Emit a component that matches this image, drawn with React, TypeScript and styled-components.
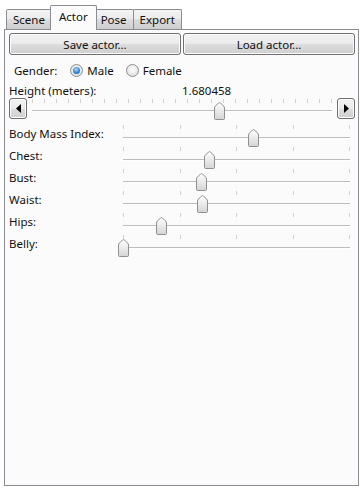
import React from "react";
import styled, { createGlobalStyle } from "styled-components";

const Global = createGlobalStyle`
  html, body { margin: 0; padding: 0; background: #ffffff; }
  body {
    font-family: "Noto Sans", "Open Sans", "DejaVu Sans", sans-serif;
    font-size: 11.5px;
    color: #111;
  }
  * { box-sizing: border-box; }
`;

const Window = styled.div`
  width: 363px;
  height: 500px;
  padding: 5px 4px 0 4px;
  display: flex;
  flex-direction: column;
`;

const TabStrip = styled.div`
  display: flex;
  align-items: flex-end;
  height: 25px;
  margin-bottom: -1px;
  padding-left: 2px;
  position: relative;
  z-index: 1;
`;

const Tab = styled.div<{ $active?: boolean }>`
  height: ${(p) => (p.$active ? "25px" : "20px")};
  margin-bottom: ${(p) => (p.$active ? "0" : "1px")};
  margin-left: ${(p) => (p.$active ? "-2px" : "-1px")};
  margin-right: ${(p) => (p.$active ? "-2px" : "0")};
  padding: 0 ${(p) => (p.$active ? "8px" : "6px")};
  border: 1px solid #898c95;
  border-bottom: none;
  border-radius: 2px 2px 0 0;
  background: ${(p) =>
    p.$active ? "#fbfbfb" : "linear-gradient(#f3f3f3, #ebebeb 50%, #dddddd 50%, #cdcdcd)"};
  display: flex;
  align-items: center;
  padding-bottom: ${(p) => (p.$active ? "3px" : "0")};
  position: relative;
  z-index: ${(p) => (p.$active ? 2 : 1)};
  &:first-child { margin-left: 0; }
`;

const Panel = styled.div`
  height: 457px;
  border: 1px solid #898c95;
  background: #fbfbfb;
  padding: 3px 3px 0 4px;
  display: flex;
  flex-direction: column;
`;

const ButtonRow = styled.div`
  display: grid;
  grid-template-columns: 1fr 1fr;
  gap: 2px;
  height: 22px;
`;

const PushButton = styled.button`
  height: 22px;
  border: 1px solid #707070;
  border-radius: 3px;
  background: linear-gradient(#f2f2f2 0%, #ebebeb 50%, #dddddd 50%, #cfcfcf 100%);
  box-shadow: inset 0 0 0 1px #fbfbfb;
  font: inherit;
  color: #111;
  padding: 0;
`;

const GenderRow = styled.div`
  display: flex;
  align-items: center;
  height: 16px;
  margin-top: 7px;
  padding-left: 5px;
`;

const RadioLabel = styled.label`
  display: flex;
  align-items: center;
  gap: 4px;
  margin-left: 12px;
  &:first-of-type { margin-left: 13px; }
`;

const RadioDot = styled.span<{ $on?: boolean }>`
  width: 13px;
  height: 13px;
  border-radius: 50%;
  border: 1px solid #8e8f8f;
  background: radial-gradient(circle at 50% 40%, #ffffff, #d6d6d6);
  display: flex;
  align-items: center;
  justify-content: center;
  &::after {
    content: "";
    width: 7px;
    height: 7px;
    border-radius: 50%;
    display: ${(p) => (p.$on ? "block" : "none")};
    background: radial-gradient(circle at 45% 35%, #a8dcff, #2c7fd0 60%, #1a4e8c);
  }
`;

const HeightHeader = styled.div`
  display: grid;
  grid-template-columns: 173px 1fr;
  height: 15px;
  line-height: 15px;
  margin-top: 5px;
`;

const HeightRow = styled.div`
  display: flex;
  align-items: flex-start;
  height: 21px;
`;

const ArrowButton = styled.button`
  width: 18px;
  height: 21px;
  flex: none;
  border: 1px solid #707070;
  border-radius: 3px;
  background: linear-gradient(#f2f2f2 0%, #ebebeb 50%, #dddddd 50%, #cfcfcf 100%);
  box-shadow: inset 0 0 0 1px #fbfbfb;
  padding: 0;
  display: flex;
  align-items: center;
  justify-content: center;
`;

const SliderBox = styled.div<{ $h: number }>`
  position: relative;
  flex: 1;
  height: ${(p) => p.$h}px;
  padding: 0 5px;
  display: flex;
  flex-direction: column;
`;

const Ticks = styled.div<{ $top: number }>`
  display: flex;
  justify-content: space-between;
  height: 4px;
  margin-top: ${(p) => p.$top}px;
`;

const Tick = styled.span`
  width: 1px;
  height: 4px;
  background: #d2d2d2;
`;

const Track = styled.div<{ $gap: number }>`
  height: 1px;
  margin-top: ${(p) => p.$gap}px;
  background: #bdbdbd;
  box-shadow: 0 1px 0 #ffffff;
`;

const ThumbWrap = styled.div<{ $top: number }>`
  position: absolute;
  top: ${(p) => p.$top}px;
  width: 11px;
  height: 18px;
  display: flex;
`;

const SliderRows = styled.div`
  display: flex;
  flex-direction: column;
  margin-top: 4px;
`;

const SliderRow = styled.div`
  display: grid;
  grid-template-columns: 109px 1fr;
  height: 22px;
  align-items: start;
`;

const RowLabel = styled.span`
  line-height: 22px;
`;

const Thumb: React.FC<{ value: number; top: number }> = ({ value, top }) => (
  <ThumbWrap $top={top} style={{ left: `calc(${value} * (100% - 11px))` }}>
    <svg width="11" height="18" viewBox="0 0 11 18">
      <defs>
        <linearGradient id="tg" x1="0" y1="0" x2="0" y2="1">
          <stop offset="0" stopColor="#ffffff" />
          <stop offset="1" stopColor="#d4d4d4" />
        </linearGradient>
      </defs>
      <path
        d="M0.5 6 Q0.5 5 1.5 4 L4.5 1 Q5.5 0.2 6.5 1 L9.5 4 Q10.5 5 10.5 6 L10.5 16.5 Q10.5 17.5 9.5 17.5 L1.5 17.5 Q0.5 17.5 0.5 16.5 Z"
        fill="url(#tg)"
        stroke="#8f8f8f"
      />
    </svg>
  </ThumbWrap>
);

const Slider: React.FC<{
  value: number;
  ticks: number;
  h: number;
  tickTop: number;
  trackGap: number;
  thumbTop: number;
}> = ({ value, ticks, h, tickTop, trackGap, thumbTop }) => (
  <SliderBox $h={h}>
    <Ticks $top={tickTop}>
      {Array.from({ length: ticks }, (_, i) => (
        <Tick key={i} />
      ))}
    </Ticks>
    <Track $gap={trackGap} />
    <Thumb value={value} top={thumbTop} />
  </SliderBox>
);

const Arrow: React.FC<{ dir: "left" | "right" }> = ({ dir }) => (
  <svg width="5" height="9" viewBox="0 0 5 9">
    {dir === "left" ? <path d="M5 0 L0 4.5 L5 9 Z" fill="#000" /> : <path d="M0 0 L5 4.5 L0 9 Z" fill="#000" />}
  </svg>
);

const bodyRows: [string, number][] = [
  ["Body Mass Index:", 0.577],
  ["Chest:", 0.379],
  ["Bust:", 0.344],
  ["Waist:", 0.348],
  ["Hips:", 0.167],
  ["Belly:", 0],
];

export default function App() {
  return (
    <>
      <Global />
      <Window>
        <TabStrip>
          <Tab>Scene</Tab>
          <Tab $active>Actor</Tab>
          <Tab>Pose</Tab>
          <Tab>Export</Tab>
        </TabStrip>
        <Panel>
          <ButtonRow>
            <PushButton>Save actor...</PushButton>
            <PushButton>Load actor...</PushButton>
          </ButtonRow>
          <GenderRow>
            <span>Gender:</span>
            <RadioLabel>
              <RadioDot $on />
              <span>Male</span>
            </RadioLabel>
            <RadioLabel>
              <RadioDot />
              <span>Female</span>
            </RadioLabel>
          </GenderRow>
          <HeightHeader>
            <span>Height (meters):</span>
            <span>1.680458</span>
          </HeightHeader>
          <HeightRow>
            <ArrowButton>
              <Arrow dir="left" />
            </ArrowButton>
            <Slider value={0.625} ticks={26} h={21} tickTop={1} trackGap={7} thumbTop={4} />
            <ArrowButton>
              <Arrow dir="right" />
            </ArrowButton>
          </HeightRow>
          <SliderRows>
            {bodyRows.map(([label, v]) => (
              <SliderRow key={label}>
                <RowLabel>{label}</RowLabel>
                <Slider value={v} ticks={5} h={22} tickTop={2} trackGap={8} thumbTop={6} />
              </SliderRow>
            ))}
          </SliderRows>
        </Panel>
      </Window>
    </>
  );
}
